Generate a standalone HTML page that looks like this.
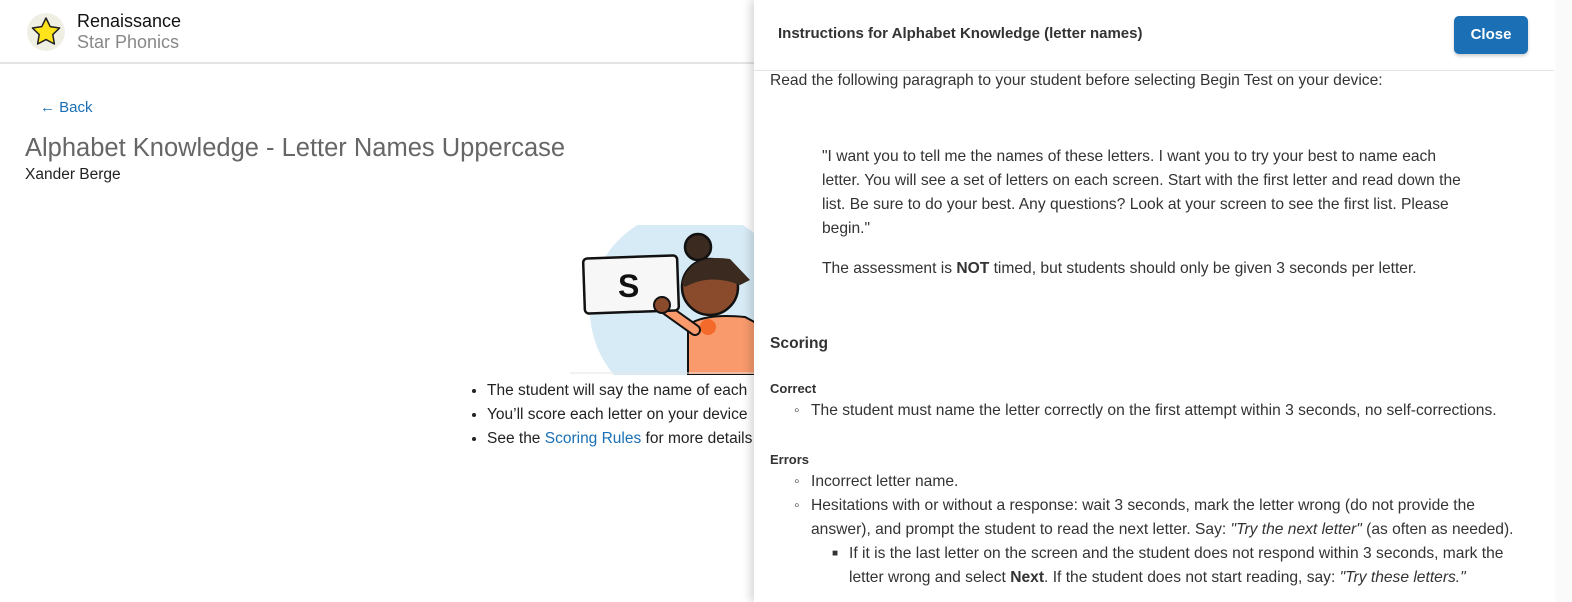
<!DOCTYPE html>
<html><head><meta charset="utf-8"><style>
*{margin:0;padding:0;box-sizing:border-box}
body{width:1572px;height:602px;overflow:hidden;background:#fff;font-family:"Liberation Sans",sans-serif;color:#333;position:relative}
.hdr{position:absolute;left:0;top:0;width:1572px;height:64px;border-bottom:2px solid #e4e4e4}
.logo1{position:absolute;left:77px;top:11px;font-size:18px;color:#111}
.logo2{position:absolute;left:77px;top:32px;font-size:18px;color:#888}
.back{position:absolute;left:40px;top:99px;font-size:15px;color:#1a6fb5}
h1{position:absolute;left:25px;top:134px;font-size:25.5px;font-weight:300;color:#666}
.name{position:absolute;left:25px;top:166px;font-size:15.5px;color:#222}
ul.l{position:absolute;left:487px;top:379px;font-size:15.5px;line-height:24px;color:#222}
.panel{position:absolute;left:754px;top:0;width:818px;height:602px;background:#fff;box-shadow:-4px 0 8px rgba(0,0,0,.15)}
.ph{position:absolute;left:0;top:0;width:800px;height:71px;border-bottom:1px solid #e4e4e4}
.ph .t{position:absolute;left:24px;top:25px;font-size:15px;font-weight:bold;color:#333}
.close{position:absolute;left:700px;top:16px;width:74px;height:38px;background:#1a6fb5;border-radius:5px;color:#fff;font-weight:bold;font-size:15px;text-align:center;line-height:38px;box-shadow:0 2px 3px rgba(0,0,0,.2)}
.sb{position:absolute;left:801px;top:0;width:17px;height:602px;background:#fafafa}
.pc{position:absolute;left:16px;top:0;width:780px;font-size:15.6px;color:#333;line-height:24px}
.a{position:absolute;white-space:nowrap}
.li{position:absolute;padding-left:17px;white-space:nowrap}
.li .b{position:absolute;left:0;top:0}
</style></head><body>
<div class="hdr">
<svg style="position:absolute;left:26px;top:12px" width="40" height="40" viewBox="0 0 40 40"><circle cx="20" cy="20" r="19" fill="#f0efe4"/><path d="M20 6l4.2 8.6 9.4 1.4-6.8 6.6 1.6 9.4L20 27.6l-8.4 4.4 1.6-9.4-6.8-6.6 9.4-1.4z" fill="#ffe41c" stroke="#222" stroke-width="1.5" stroke-linejoin="round"/></svg>
<div class="logo1">Renaissance</div><div class="logo2">Star Phonics</div>
</div>
<div class="back">← Back</div>
<h1>Alphabet Knowledge - Letter Names Uppercase</h1>
<div class="name">Xander Berge</div>
<svg style="position:absolute;left:570px;top:225px" width="190" height="150">
<circle cx="120" cy="85" r="100" fill="#d7ebf6"/>
<path d="M118 150 L118 100 Q135 88 175 92 L190 100 L190 150z" fill="#f89a6c" stroke="#111" stroke-width="2"/>
<circle cx="138" cy="102" r="8" fill="#f36a2a"/>
<circle cx="140" cy="62" r="28" fill="#8a4a2c" stroke="#111" stroke-width="2.5"/>
<circle cx="128" cy="22" r="13" fill="#3a2a20" stroke="#111" stroke-width="2.5"/>
<path d="M112 58 Q120 28 160 34 L180 55 L170 60 Q140 48 115 62z" fill="#3a2a20"/>
<path d="M90 80 L125 105" stroke="#111" stroke-width="12" stroke-linecap="round"/><path d="M90 80 L125 105" stroke="#f89a6c" stroke-width="8" stroke-linecap="round"/>
<rect x="14" y="32" width="94" height="55" rx="4" fill="#f7f7f7" stroke="#111" stroke-width="2.5" transform="rotate(-2 60 60)"/>
<text x="48" y="72" font-family="Liberation Sans" font-weight="bold" font-size="32" fill="#111">S</text>
<circle cx="92" cy="80" r="8" fill="#8a4a2c" stroke="#111" stroke-width="2"/>
<line x1="0" y1="148" x2="190" y2="148" stroke="#e4e4e4"/>
</svg>
<ul class="l"><li>The student will say the name of each</li><li>You’ll score each letter on your device</li><li>See the <span style="color:#1a6fb5">Scoring Rules</span> for more details</li></ul>
<div class="panel">
<div class="ph"><div class="t">Instructions for Alphabet Knowledge (letter names)</div><div class="close">Close</div></div>
<div class="sb"></div>
<div class="pc">
<div class="a" style="top:69px;left:0">Read the following paragraph to your student before selecting Begin Test on your device:</div>
<div class="a" style="top:145px;left:52px">"I want you to tell me the names of these letters. I want you to try your best to name each<br>letter. You will see a set of letters on each screen. Start with the first letter and read down the<br>list. Be sure to do your best. Any questions? Look at your screen to see the first list. Please<br>begin."</div>
<div class="a" style="top:257px;left:52px">The assessment is <b>NOT</b> timed, but students should only be given 3 seconds per letter.</div>
<div class="a" style="top:332px;left:0;font-weight:bold">Scoring</div>
<div class="a" style="top:377px;left:0;font-weight:bold;font-size:13px">Correct</div>
<div class="li" style="top:399px;left:24px"><span class="b">◦</span>The student must name the letter correctly on the first attempt within 3 seconds, no self-corrections.</div>
<div class="a" style="top:448px;left:0;font-weight:bold;font-size:13px">Errors</div>
<div class="li" style="top:470px;left:24px"><span class="b">◦</span>Incorrect letter name.</div>
<div class="li" style="top:494px;left:24px"><span class="b">◦</span>Hesitations with or without a response: wait 3 seconds, mark the letter wrong (do not provide the<br>answer), and prompt the student to read the next letter. Say: <i>"Try the next letter"</i> (as often as needed).</div>
<div class="li" style="top:542px;left:62px"><span class="b" style="font-size:10px">■</span>If it is the last letter on the screen and the student does not respond within 3 seconds, mark the<br>letter wrong and select <b>Next</b>. If the student does not start reading, say: <i>"Try these letters."</i></div>
</div>
</div>
</body></html>
